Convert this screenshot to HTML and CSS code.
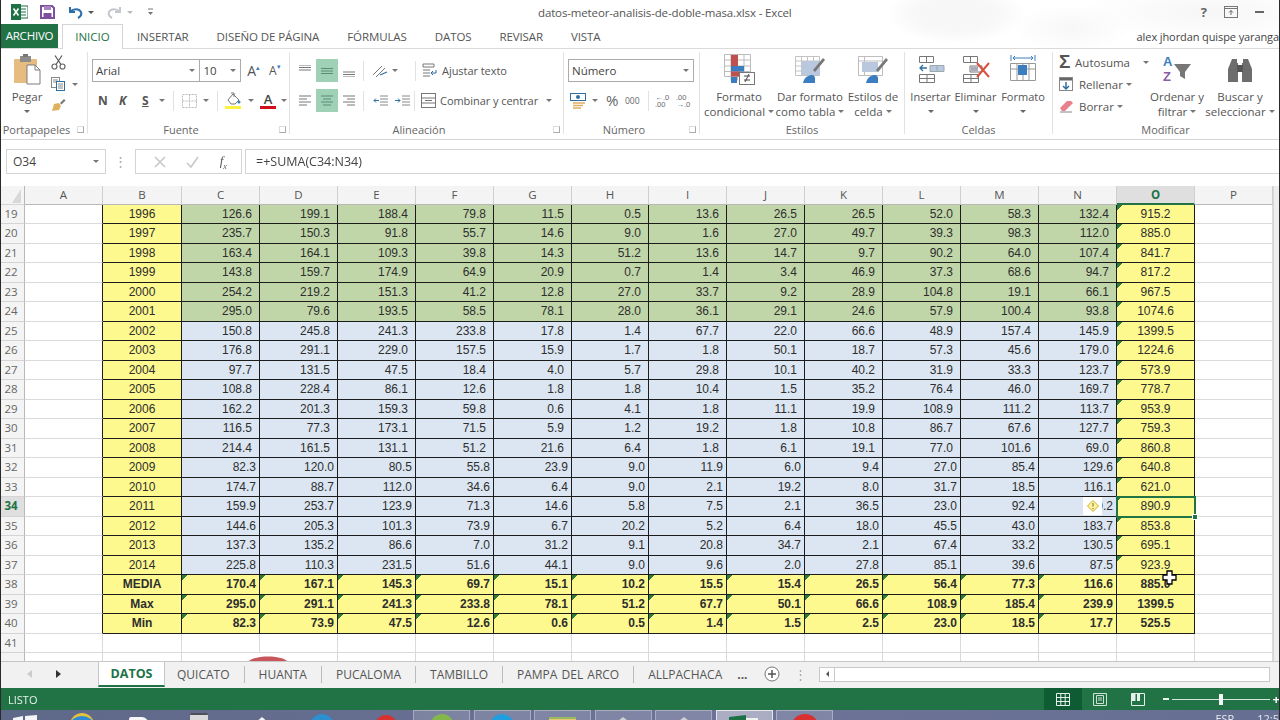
FILE: index.html
```html
<!DOCTYPE html>
<html lang="es">
<head>
<meta charset="utf-8">
<title>datos-meteor-analisis-de-doble-masa.xlsx - Excel</title>
<link rel="stylesheet" href="styles.css">
</head>
<body>
<div class="app">
  <header class="top">
    <div class="titlebar">
      <div class="qat">
        <svg class="q-xl" width="17" height="16" viewBox="0 0 17 16"><rect x="7" y="2" width="10" height="12" fill="#fff" stroke="#1e7145"/><path d="M10 5h5M10 8h5M10 11h5" stroke="#1e7145"/><rect y="0" width="10" height="16" fill="#1e7145"/><path d="M2.5 4.5l5 7M7.5 4.5l-5 7" stroke="#fff" stroke-width="1.6"/></svg>
        <svg class="q-save" width="15" height="14" viewBox="0 0 15 14"><path d="M1 1h11l2 2v10H1z" fill="#fff" stroke="#7d4f9e" stroke-width="2"/><rect x="4" y="1" width="7" height="4" fill="#a984c4"/><rect x="3.500" y="8" width="8" height="5" fill="#7d4f9e"/></svg>
        <svg class="q-undo" width="15" height="14" viewBox="0 0 15 14"><path d="M2 2v5h5M2.500 6.500C5 3.500 11 3 13 7c1 3-1 5-3 6" fill="none" stroke="#2c6fa8" stroke-width="2"/></svg>
        <i class="caret q-c1"></i>
        <svg class="q-redo" width="15" height="14" viewBox="0 0 15 14"><path d="M13 2v5H8M12.500 6.500C10 3.500 4 3 2 7c-1 3 1 5 3 6" fill="none" stroke="#c4c8cc" stroke-width="2"/></svg>
        <i class="caret q-c2"></i>
        <svg class="q-more" width="7" height="8" viewBox="0 0 7 8"><path d="M1 1h5" stroke="#777"/><path d="M1 4h5l-2.500 3z" fill="#777"/></svg>
      </div>
      <div class="doc-title">datos-meteor-analisis-de-doble-masa.xlsx - Excel</div>
      <div class="win-ctl">
        <span class="help">?</span>
        <svg width="14" height="12" viewBox="0 0 14 12"><rect x=".5" y=".5" width="13" height="11" fill="none" stroke="#777"/><path d="M1 2.500h12" stroke="#777"/><path d="M7 9V4.500M5 6.500l2-2 2 2" fill="none" stroke="#666"/></svg>
        <i class="minimize"></i>
      </div>
    </div>
    <nav class="tabs">
      <span class="tab-file">ARCHIVO</span>
      <span class="tab-active">INICIO</span>
      <span class="tab">INSERTAR</span>
      <span class="tab">DISEÑO DE PÁGINA</span>
      <span class="tab">FÓRMULAS</span>
      <span class="tab">DATOS</span>
      <span class="tab">REVISAR</span>
      <span class="tab">VISTA</span>
      <span class="account">alex jhordan quispe yaranga</span>
    </nav>
  </header>

  <section class="ribbon">
    <div class="group g-clip">
      <div class="gbody clip-body">
        <div class="big paste">
          <div class="bigicon">
            <svg width="28" height="31" viewBox="0 0 28 31"><rect x="1" y="5" width="23" height="24" rx="1" fill="#e6bc80"/><rect x="7" y="2" width="11" height="6" fill="#8d8d8d"/><rect x="10" y="0" width="5" height="3" fill="#777"/><path d="M14 11h8l5 5v14H14z" fill="#fff" stroke="#7c7c7c"/><path d="M22 11v5h5" fill="none" stroke="#7c7c7c"/></svg>
          </div>
          <span>Pegar</span>
          <i class="caret big-caret"></i>
        </div>
        <div class="clip-tools">
          <svg width="15" height="15" viewBox="0 0 15 15"><circle cx="3.500" cy="11.500" r="2.500" fill="none" stroke="#666" stroke-width="1.200"/><circle cx="11.500" cy="11.500" r="2.500" fill="none" stroke="#666" stroke-width="1.200"/><path d="M5 9.500L11 .5M10 9.500L4 .5" stroke="#555" stroke-width="1.200"/></svg>
          <span class="ct-row"><svg width="15" height="14" viewBox="0 0 15 14"><rect x=".5" y=".5" width="8" height="10" fill="#fff" stroke="#888"/><rect x="5.500" y="4.500" width="8" height="9" fill="#fff" stroke="#2f6f9f"/><path d="M2 3h5M2 5h3M7 7h5M7 9h5M7 11h5" stroke="#888"/></svg><i class="caret"></i></span>
          <svg width="15" height="14" viewBox="0 0 15 14"><path d="M9 5l4-4 1.500 1.500-4 4z" fill="#777"/><path d="M3 6l5-1 2 3-2 4-7 1z" fill="#e0b060"/></svg>
        </div>
      </div>
      <div class="glabel with-launcher">Portapapeles<i class="launcher"></i></div>
    </div>
    <i class="vsep"></i>

    <div class="group g-font">
      <div class="gbody rows2">
        <div class="rrow">
          <div class="combo c-font">Arial<i class="caret"></i></div>
          <div class="combo c-size">10<i class="caret"></i></div>
          <span class="grow-a">A<sup>▴</sup></span>
          <span class="shrink-a">A<sup>▾</sup></span>
        </div>
        <div class="rrow font-tools">
          <b class="fb">N</b>
          <b class="fb it">K</b>
          <b class="fb un">S</b><i class="caret c-s"></i>
          <i class="rsep"></i>
          <svg class="i-border" width="15" height="14" viewBox="0 0 15 14"><path d="M.5.5h14v13H.5zM7.500.5v13M.5 7h14" fill="none" stroke="#bbb" stroke-dasharray="2 1"/></svg><i class="caret"></i>
          <i class="rsep"></i>
          <svg class="i-fill" width="17" height="17" viewBox="0 0 17 17"><path d="M3 8l5-6 6 6-4 4H6z" fill="#fff" stroke="#777"/><path d="M6 1h3v4" fill="none" stroke="#777"/><circle cx="14" cy="10" r="1.500" fill="#3a7fc0"/><rect y="14" width="16" height="3" fill="#fff23d"/></svg><i class="caret"></i>
          <span class="i-color">A</span><i class="caret"></i>
        </div>
      </div>
      <div class="glabel with-launcher">Fuente<i class="launcher"></i></div>
    </div>
    <i class="vsep"></i>

    <div class="group g-align">
      <div class="gbody rows2">
        <div class="rrow">
          <span class="abtn"><svg width="16" height="12" viewBox="0 0 16 12"><path d="M2 0h12M2 2.500h12M2 5h12" stroke="#777"/></svg></span>
          <span class="abtn on"><svg width="16" height="12" viewBox="0 0 16 12"><path d="M2 3.500h12M2 6h12M2 8.500h12" stroke="#5d8c74"/></svg></span>
          <span class="abtn"><svg width="16" height="12" viewBox="0 0 16 12" class="low"><path d="M2 7h12M2 9.500h12M2 12h12" stroke="#777"/></svg></span>
          <i class="rsep s-a"></i>
          <svg class="i-orient" width="18" height="16" viewBox="0 0 18 16"><path d="M2 12l9-9M5 14l9-9" stroke="#777"/><path d="M9 12l7-3" stroke="#2f6f9f" stroke-width="1.300"/></svg><i class="caret"></i>
          <i class="rsep s-b"></i>
          <svg class="i-wrap" width="15" height="15" viewBox="0 0 15 15"><path d="M1 1h11v3H1zM1 7h7M1 10h7M1 13h7" fill="none" stroke="#777"/><path d="M14 7v3H9M11 8l-2 2 2 2" fill="none" stroke="#2f6f9f"/></svg>
          <span class="atext">Ajustar texto</span>
        </div>
        <div class="rrow">
          <span class="abtn"><svg width="16" height="12" viewBox="0 0 16 12"><path d="M2 1h12M2 4h8M2 7h12M2 10h8" stroke="#777"/></svg></span>
          <span class="abtn on"><svg width="16" height="12" viewBox="0 0 16 12"><path d="M2 1h12M4 4h8M2 7h12M4 10h8" stroke="#5d8c74"/></svg></span>
          <span class="abtn"><svg width="16" height="12" viewBox="0 0 16 12"><path d="M2 1h12M6 4h8M2 7h12M6 10h8" stroke="#777"/></svg></span>
          <i class="rsep s-a"></i>
          <svg class="i-indent" width="15" height="12" viewBox="0 0 15 12"><path d="M7 1h8M7 4h8M7 7h8M7 10h8" stroke="#888"/><path d="M6 5.500H1M3 3.500l-2 2 2 2" fill="none" stroke="#2f6f9f"/></svg>
          <svg class="i-indent2" width="15" height="12" viewBox="0 0 15 12"><path d="M7 1h8M7 4h8M7 7h8M7 10h8" stroke="#888"/><path d="M0 5.500h5M3 3.500l2 2-2 2" fill="none" stroke="#2f6f9f"/></svg>
          <i class="rsep s-c"></i>
          <svg class="i-merge" width="15" height="15" viewBox="0 0 15 15"><rect x=".5" y=".5" width="14" height="14" fill="none" stroke="#777"/><path d="M1 5h13M1 10h13M4 7.500h7" fill="none" stroke="#777"/></svg>
          <span class="atext">Combinar y centrar</span><i class="caret c-merge"></i>
        </div>
      </div>
      <div class="glabel with-launcher">Alineación<i class="launcher"></i></div>
    </div>
    <i class="vsep"></i>

    <div class="group g-num">
      <div class="gbody rows2">
        <div class="rrow"><div class="combo c-num">Número<i class="caret"></i></div></div>
        <div class="rrow num-tools">
          <svg class="i-cur" width="17" height="16" viewBox="0 0 17 16"><rect x=".5" y=".5" width="15" height="7" fill="#fff" stroke="#2f6f9f"/><circle cx="8" cy="4" r="2" fill="#2f6f9f"/><path d="M3 10h12M3 12.500h10M3 15h8" stroke="#e0b060" stroke-width="1.300"/></svg><i class="caret"></i>
          <span class="pct">%</span>
          <span class="mil">000</span>
          <i class="rsep s-n"></i>
          <span class="dec"><small class="b">←</small>.0<br>.00</span>
          <span class="dec d2">.00<br><small class="b">→</small>.0</span>
        </div>
      </div>
      <div class="glabel with-launcher">Número<i class="launcher"></i></div>
    </div>
    <i class="vsep"></i>

    <div class="group g-styles">
      <div class="gbody bigs">
        <div class="big w70">
          <div class="bigicon"><svg width="31" height="31" viewBox="0 0 31 31"><path d="M.5.5h26v22H.5zM.5 6h26M.5 12h26M.5 17.500h26M7 .5v26M13.500.5v26M20 .5v20" fill="none" stroke="#bbb"/><rect x="7" y="1" width="7" height="5" fill="#c0504d"/><rect x="7" y="6" width="7" height="6" fill="#c0504d"/><rect x="7" y="12" width="13" height="5.500" fill="#3a7ebf"/><rect x="7" y="17.500" width="9" height="5" fill="#c0504d"/><rect x="7" y="23" width="6" height="6" fill="#3a7ebf"/><rect x="15.500" y="18.500" width="15" height="12" fill="#fff" stroke="#777"/><path d="M20 22h6M20 26h6M25 20l-4 8" stroke="#444"/></svg></div>
          <span>Formato</span><span class="wc">condicional<i class="caret"></i></span>
        </div>
        <div class="big w72">
          <div class="bigicon"><svg width="31" height="31" viewBox="0 0 31 31"><path d="M.5 2.500h24v19H.5zM.5 7h24M.5 12h24M.5 17h24M6.500 2.500v19M12.500 2.500v19M18.500 2.500v19" fill="none" stroke="#c3c3c3"/><rect x="6.500" y="7" width="18" height="14" fill="#b9c8de"/><path d="M18 16L28 4l2 2-10 12z" fill="#777"/><path d="M8 29c1-6 6-8 9-8 2 0 3 2 3 3v5z" fill="#3a7ebf"/></svg></div>
          <span>Dar formato</span><span class="wc">como tabla<i class="caret"></i></span>
        </div>
        <div class="big w54">
          <div class="bigicon"><svg width="31" height="31" viewBox="0 0 31 31"><path d="M.5 2.500h24v19H.5zM.5 7h24M6.500 2.500V21" fill="none" stroke="#bdbdbd"/><rect x="4" y="8" width="16" height="10" fill="#b9c8de"/><path d="M18 16L28 4l2 2-10 12z" fill="#777"/><path d="M8 29c1-6 6-8 9-8 2 0 3 2 3 3v5z" fill="#3a7ebf"/></svg></div>
          <span>Estilos de</span><span class="wc">celda<i class="caret"></i></span>
        </div>
      </div>
      <div class="glabel">Estilos</div>
    </div>
    <i class="vsep"></i>

    <div class="group g-cells">
      <div class="gbody bigs">
        <div class="big w45">
          <div class="bigicon"><svg width="28" height="28" viewBox="0 0 28 28"><path d="M2.500 1.500h14v6h-14zM9.500 1.500v6M2.500 19.500h15v8h-15zM10 19.500v8M2.500 23.500h15" fill="none" stroke="#777"/><path d="M10 13H3M6 10l-3 3 3 3" fill="none" stroke="#2f6f9f" stroke-width="1.300"/><path d="M13 10.500h14v6H13zM20 10.500v6" fill="#b9c8de" stroke="#9aa"/></svg></div>
          <span>Insertar</span><i class="caret big-caret"></i>
        </div>
        <div class="big w45">
          <div class="bigicon"><svg width="30" height="28" viewBox="0 0 30 28"><path d="M2.500 1.500h14v6h-14zM9.500 1.500v6M2.500 19.500h15v8h-15zM10 19.500v8M2.500 23.500h15M9 11h12v6H9z" fill="none" stroke="#777"/><rect x="10" y="12" width="7" height="4" fill="#aab"/><path d="M16 8l12 14M28 8L16 22" stroke="#d9503c" stroke-width="2"/></svg></div>
          <span>Eliminar</span><i class="caret big-caret"></i>
        </div>
        <div class="big w50">
          <div class="bigicon"><svg width="28" height="30" viewBox="0 0 28 30"><path d="M1.500 9.500h25v17h-25zM1.500 15h25M8 9.500v17M14 9.500v17M20 9.500v17" fill="none" stroke="#999"/><rect x="9" y="11" width="9" height="10" fill="#3a7ebf"/><path d="M2 1v6M26 1v6M4 4h20M6 2L4 4l2 2M22 2l2 2-2 2" fill="none" stroke="#3a7ebf"/></svg></div>
          <span>Formato</span><i class="caret big-caret"></i>
        </div>
      </div>
      <div class="glabel">Celdas</div>
    </div>
    <i class="vsep"></i>

    <div class="group g-edit">
      <div class="gbody bigs">
        <div class="edit-col">
          <div class="edit-row"><span class="sigma">Σ</span><span>Autosuma</span><i class="caret c-sum"></i></div>
          <div class="edit-row"><svg width="15" height="15" viewBox="0 0 15 15"><rect x=".5" y=".5" width="13" height="13" fill="#fff" stroke="#888"/><rect x="1" y="1" width="12" height="2.500" fill="#666"/><path d="M7 5v7M4 9l3 3 3-3" fill="none" stroke="#2f6f9f" stroke-width="1.500"/></svg><span>Rellenar</span><i class="caret"></i></div>
          <div class="edit-row"><svg width="15" height="14" viewBox="0 0 15 14"><path d="M1 9l7-7h4l2 2-8 8H3z" fill="#e8808e"/><path d="M1 13h12" stroke="#888"/></svg><span>Borrar</span><i class="caret"></i></div>
        </div>
        <div class="big w56">
          <div class="bigicon"><svg width="32" height="32" viewBox="0 0 32 32"><text x="2" y="13" class="az-a">A</text><text x="2" y="28" class="az-z">Z</text><path d="M13 11h17l-6 8v7l-5-3v-4z" fill="#777"/></svg></div>
          <span>Ordenar y</span><span class="wc">filtrar<i class="caret"></i></span>
        </div>
        <div class="big w70">
          <div class="bigicon"><svg width="26" height="26" viewBox="0 0 26 26"><path d="M5 3h5v4h1v19H1V13zM21 3h-5v4h-1v19h10V13z" fill="#6d6d6d"/><rect x="10" y="9" width="6" height="7" fill="#555"/></svg></div>
          <span>Buscar y</span><span class="wc">seleccionar<i class="caret"></i></span>
        </div>
      </div>
      <div class="glabel">Modificar</div>
    </div>
  </section>

  <section class="formula">
    <div class="namebox">O34<i class="caret"></i></div>
    <span class="fdots">⋮</span>
    <div class="fbtns">
      <svg width="12" height="12" viewBox="0 0 12 12"><path d="M1 1l10 10M11 1L1 11" stroke="#c8c8c8" stroke-width="1.600"/></svg>
      <svg width="13" height="12" viewBox="0 0 13 12"><path d="M1 7l4 4 7-10" fill="none" stroke="#c8c8c8" stroke-width="1.600"/></svg>
      <span class="fx">f<sub>x</sub></span>
    </div>
    <div class="finput">=+SUMA(C34:N34)</div>
  </section>

  <section class="sheet">
    <div class="grid">
      <div class="row head">
        <span class="corner"><svg width="9" height="14" viewBox="0 0 9 14"><path d="M9 0v14H0z" fill="#d8d8d8"/></svg></span>
        <span>A</span><span>B</span><span>C</span><span>D</span><span>E</span><span>F</span><span>G</span><span>H</span><span>I</span><span>J</span><span>K</span><span>L</span><span>M</span><span>N</span><span class="cur">O</span><span>P</span>
      </div>
      <div class="row data green wide"><span>19</span><span></span><span>1996</span><span>126.6</span><span>199.1</span><span>188.4</span><span>79.8</span><span>11.5</span><span>0.5</span><span>13.6</span><span>26.5</span><span>26.5</span><span>52.0</span><span>58.3</span><span>132.4</span><span>915.2</span><span></span></div>
      <div class="row data green wide"><span>20</span><span></span><span>1997</span><span>235.7</span><span>150.3</span><span>91.8</span><span>55.7</span><span>14.6</span><span>9.0</span><span>1.6</span><span>27.0</span><span>49.7</span><span>39.3</span><span>98.3</span><span>112.0</span><span>885.0</span><span></span></div>
      <div class="row data green wide"><span>21</span><span></span><span>1998</span><span>163.4</span><span>164.1</span><span>109.3</span><span>39.8</span><span>14.3</span><span>51.2</span><span>13.6</span><span>14.7</span><span>9.7</span><span>90.2</span><span>64.0</span><span>107.4</span><span>841.7</span><span></span></div>
      <div class="row data green wide"><span>22</span><span></span><span>1999</span><span>143.8</span><span>159.7</span><span>174.9</span><span>64.9</span><span>20.9</span><span>0.7</span><span>1.4</span><span>3.4</span><span>46.9</span><span>37.3</span><span>68.6</span><span>94.7</span><span>817.2</span><span></span></div>
      <div class="row data green wide"><span>23</span><span></span><span>2000</span><span>254.2</span><span>219.2</span><span>151.3</span><span>41.2</span><span>12.8</span><span>27.0</span><span>33.7</span><span>9.2</span><span>28.9</span><span>104.8</span><span>19.1</span><span>66.1</span><span>967.5</span><span></span></div>
      <div class="row data green wide"><span>24</span><span></span><span>2001</span><span>295.0</span><span>79.6</span><span>193.5</span><span>58.5</span><span>78.1</span><span>28.0</span><span>36.1</span><span>29.1</span><span>24.6</span><span>57.9</span><span>100.4</span><span>93.8</span><span>1074.6</span><span></span></div>
      <div class="row data blue wide"><span>25</span><span></span><span>2002</span><span>150.8</span><span>245.8</span><span>241.3</span><span>233.8</span><span>17.8</span><span>1.4</span><span>67.7</span><span>22.0</span><span>66.6</span><span>48.9</span><span>157.4</span><span>145.9</span><span>1399.5</span><span></span></div>
      <div class="row data blue wide"><span>26</span><span></span><span>2003</span><span>176.8</span><span>291.1</span><span>229.0</span><span>157.5</span><span>15.9</span><span>1.7</span><span>1.8</span><span>50.1</span><span>18.7</span><span>57.3</span><span>45.6</span><span>179.0</span><span>1224.6</span><span></span></div>
      <div class="row data blue wide"><span>27</span><span></span><span>2004</span><span>97.7</span><span>131.5</span><span>47.5</span><span>18.4</span><span>4.0</span><span>5.7</span><span>29.8</span><span>10.1</span><span>40.2</span><span>31.9</span><span>33.3</span><span>123.7</span><span>573.9</span><span></span></div>
      <div class="row data blue wide"><span>28</span><span></span><span>2005</span><span>108.8</span><span>228.4</span><span>86.1</span><span>12.6</span><span>1.8</span><span>1.8</span><span>10.4</span><span>1.5</span><span>35.2</span><span>76.4</span><span>46.0</span><span>169.7</span><span>778.7</span><span></span></div>
      <div class="row data blue wide"><span>29</span><span></span><span>2006</span><span>162.2</span><span>201.3</span><span>159.3</span><span>59.8</span><span>0.6</span><span>4.1</span><span>1.8</span><span>11.1</span><span>19.9</span><span>108.9</span><span>111.2</span><span>113.7</span><span>953.9</span><span></span></div>
      <div class="row data blue wide"><span>30</span><span></span><span>2007</span><span>116.5</span><span>77.3</span><span>173.1</span><span>71.5</span><span>5.9</span><span>1.2</span><span>19.2</span><span>1.8</span><span>10.8</span><span>86.7</span><span>67.6</span><span>127.7</span><span>759.3</span><span></span></div>
      <div class="row data blue wide"><span>31</span><span></span><span>2008</span><span>214.4</span><span>161.5</span><span>131.1</span><span>51.2</span><span>21.6</span><span>6.4</span><span>1.8</span><span>6.1</span><span>19.1</span><span>77.0</span><span>101.6</span><span>69.0</span><span>860.8</span><span></span></div>
      <div class="row data blue"><span>32</span><span></span><span>2009</span><span>82.3</span><span>120.0</span><span>80.5</span><span>55.8</span><span>23.9</span><span>9.0</span><span>11.9</span><span>6.0</span><span>9.4</span><span>27.0</span><span>85.4</span><span>129.6</span><span>640.8</span><span></span></div>
      <div class="row data blue"><span>33</span><span></span><span>2010</span><span>174.7</span><span>88.7</span><span>112.0</span><span>34.6</span><span>6.4</span><span>9.0</span><span>2.1</span><span>19.2</span><span>8.0</span><span>31.7</span><span>18.5</span><span>116.1</span><span>621.0</span><span></span></div>
      <div class="row data blue active"><span>34</span><span></span><span>2011</span><span>159.9</span><span>253.7</span><span>123.9</span><span>71.3</span><span>14.6</span><span>5.8</span><span>7.5</span><span>2.1</span><span>36.5</span><span>23.0</span><span>92.4</span><span class="has-tag">100.2<em class="errtag"><svg width="12" height="12" viewBox="0 0 12 12"><path d="M6 .5L11.500 6 6 11.500.5 6z" fill="#fdf3a0" stroke="#c9ad2c"/><path d="M6 3v3.500M6 8v1.200" stroke="#8a6a10"/></svg></em></span><span class="selected">890.9<em class="handle"></em></span><span></span></div>
      <div class="row data blue"><span>35</span><span></span><span>2012</span><span>144.6</span><span>205.3</span><span>101.3</span><span>73.9</span><span>6.7</span><span>20.2</span><span>5.2</span><span>6.4</span><span>18.0</span><span>45.5</span><span>43.0</span><span>183.7</span><span>853.8</span><span></span></div>
      <div class="row data blue"><span>36</span><span></span><span>2013</span><span>137.3</span><span>135.2</span><span>86.6</span><span>7.0</span><span>31.2</span><span>9.1</span><span>20.8</span><span>34.7</span><span>2.1</span><span>67.4</span><span>33.2</span><span>130.5</span><span>695.1</span><span></span></div>
      <div class="row data blue"><span>37</span><span></span><span>2014</span><span>225.8</span><span>110.3</span><span>231.5</span><span>51.6</span><span>44.1</span><span>9.0</span><span>9.6</span><span>2.0</span><span>27.8</span><span>85.1</span><span>39.6</span><span>87.5</span><span>923.9</span><span></span></div>
      <div class="row data stat"><span>38</span><span></span><span>MEDIA</span><span>170.4</span><span>167.1</span><span>145.3</span><span>69.7</span><span>15.1</span><span>10.2</span><span>15.5</span><span>15.4</span><span>26.5</span><span>56.4</span><span>77.3</span><span>116.6</span><span class="has-cursor">885.0<svg class="cursor" width="15" height="15" viewBox="0 0 15 15"><path d="M5 1h5v4h4v5h-4v4H5v-4H1V5h4z" fill="#fff" stroke="#000" stroke-width="1.300"/></svg></span><span></span></div>
      <div class="row data stat"><span>39</span><span></span><span>Max</span><span>295.0</span><span>291.1</span><span>241.3</span><span>233.8</span><span>78.1</span><span>51.2</span><span>67.7</span><span>50.1</span><span>66.6</span><span>108.9</span><span>185.4</span><span>239.9</span><span>1399.5</span><span></span></div>
      <div class="row data stat"><span>40</span><span></span><span>Min</span><span>82.3</span><span>73.9</span><span>47.5</span><span>12.6</span><span>0.6</span><span>0.5</span><span>1.4</span><span>1.5</span><span>2.5</span><span>23.0</span><span>18.5</span><span>17.7</span><span>525.5</span><span></span></div>
      <div class="row"><span>41</span><span></span><span></span><span></span><span></span><span></span><span></span><span></span><span></span><span></span><span></span><span></span><span></span><span></span><span></span><span></span><span></span></div>
      <div class="row"><span></span><span></span><span></span><span></span><span></span><span></span><span></span><span></span><span></span><span></span><span></span><span></span><span></span><span></span><span></span><span></span><span></span></div>
      <svg class="stamp" width="73" height="8" viewBox="0 0 73 8"><rect width="73" height="8" fill="#fff"/><path d="M17 8C23 2 49 2 55 8z" fill="#c8565a"/></svg>
    </div>
    <div class="vscroll"></div>
  </section>

  <section class="sheetbar">
    <div class="sheetnav"><i class="tri-l"></i><i class="tri-r"></i></div>
    <div class="sheettabs">
      <span class="stab on">DATOS</span>
      <span class="stab first">QUICATO</span>
      <span class="stab">HUANTA</span>
      <span class="stab">PUCALOMA</span>
      <span class="stab">TAMBILLO</span>
      <span class="stab">PAMPA DEL ARCO</span>
      <span class="stab last">ALLPACHACA</span>
      <b class="more">...</b>
    </div>
    <svg class="addsheet" width="16" height="16" viewBox="0 0 16 16"><circle cx="8" cy="8" r="7" fill="#fff" stroke="#777"/><path d="M8 4v8M4 8h8" stroke="#555" stroke-width="1.500"/></svg>
    <span class="bdots">⋮</span>
    <div class="hscroll"><span class="hs-btn"><i class="tri-s"></i></span><span class="hs-track"></span></div>
  </section>

  <footer class="status">
    <span class="ready">LISTO</span>
    <div class="views">
      <span class="view on"><svg width="14" height="13" viewBox="0 0 14 13"><path d="M.5.500h13v12H.5zM.5 4.500h13M.5 8.500h13M4.800.5v12M9.200.5v12" fill="none" stroke="#e6f0ea"/></svg></span>
      <span class="view"><svg width="14" height="13" viewBox="0 0 14 13"><path d="M.5.500h13v12H.5z" fill="none" stroke="#cfe0d6"/><path d="M3.500 2.500h7v8h-7zM5 5h4M5 7h4" fill="none" stroke="#cfe0d6"/></svg></span>
      <span class="view"><svg width="14" height="13" viewBox="0 0 14 13"><path d="M.5.500h13v12H.5z" fill="none" stroke="#e6f0ea"/><path d="M1 1h3.500v7H1zM6 1h3v7H6z" fill="#e6f0ea"/></svg></span>
    </div>
    <div class="zoom">
      <i class="z-minus"></i>
      <div class="z-track"><i class="z-thumb"></i></div>
      <span class="z-plus">+</span>
    </div>
  </footer>

  <div class="taskbar">
    <span class="slot s48"><svg class="t-win" width="26" height="12" viewBox="0 0 26 12"><path d="M1 3l10-2v11H1zM13 1l12-1v12H13z" fill="#f4f5f8"/></svg></span>
    <span class="slot s68"><i class="dot ie"></i></span>
    <span class="slot s44"><i class="paper"></i></span>
    <span class="slot s78"><i class="calc"></i></span>
    <span class="slot s48"><i class="uparrow"></i></span>
    <span class="slot s72"><i class="dot ff"></i></span>
    <span class="slot s55"><i class="dot red"></i></span>
    <span class="tbtn"><i class="dot lime"></i></span>
    <span class="tbtn"><i class="dot sky"></i></span>
    <span class="tbtn"><i class="folder"></i></span>
    <span class="tbtn"><i class="graytri"></i></span>
    <span class="tbtn"><i class="graytri"></i></span>
    <span class="tbtn open"><svg class="t-xl" width="32" height="8" viewBox="0 0 32 8"><rect x="16" y="3" width="14" height="5" fill="#eef3ef"/><path d="M1 2l17-2v8H1z" fill="#1e7145"/></svg></span>
    <span class="tbtn"><i class="dot red big-red"></i></span>
    <span class="tray"><span>ESP</span><span>12:5</span></span>
  </div>
</div>
</body>
</html>
```

FILE: styles.css
```css
* { box-sizing: border-box; }
html, body { margin: 0; padding: 0; }
body { width: 1280px; height: 720px; overflow: hidden; background: #fff; }
i, em { font-style: normal; display: inline-block; }
svg { flex: none; }

.app {
  width: 1280px; height: 720px; display: flex; flex-direction: column; overflow: hidden;
  border-left: 1px solid #2a2a2a; border-right: 1px solid #2a2a2a;
  font-family: "Open Sans", "Noto Sans", sans-serif; font-size: 11.5px; color: #555;
  filter: blur(.35px);
}

.caret { width: 0; height: 0; border: 3px solid transparent; border-top: 3px solid #777; border-bottom: 0; flex: none; }

/* title + tabs */
.top {
  height: 48px; flex: none;
  background:
    radial-gradient(ellipse 70px 30px at 955px 14px, #f6f6f6 0, #f8f8f8 60%, rgba(255,255,255,0) 100%),
    radial-gradient(ellipse 60px 24px at 1070px 28px, #f7f7f7 0, rgba(255,255,255,0) 100%),
    radial-gradient(ellipse 130px 30px at 1210px 12px, #f6f6f6 0, rgba(255,255,255,0) 100%),
    #fff;
}
.titlebar { height: 24px; display: flex; align-items: center; position: relative; }
.qat { display: flex; align-items: center; width: 300px; padding-left: 10px; }
.q-save { margin-left: 12px; }
.q-undo { margin-left: 13px; }
.q-c1 { margin-left: 5px; border-top-color: #555; }
.q-redo { margin-left: 13px; }
.q-c2 { margin-left: 5px; border-top-color: #bbb; }
.q-more { margin-left: 14px; }
.doc-title { margin-left: 237px; font-size: 11.5px; color: #555; letter-spacing: -.14px; white-space: nowrap; width: 600px; }
.win-ctl { display: flex; align-items: center; margin-left: auto; padding-right: 15px; }
.help { font-weight: 700; font-size: 13px; color: #666; margin-right: 17px; }
.minimize { width: 9px; height: 2px; background: #666; margin-left: 17px; }

.tabs { height: 24px; display: flex; align-items: center; font-size: 11.5px; color: #555; }
.tab-file { width: 57px; height: 24px; line-height: 24px; background: #217346; color: #fff; text-align: center; font-size: 11.5px; letter-spacing: -.2px; }
.tab-active {
  width: 61px; height: 25px; line-height: 24px; margin: 0 14px 0 4px; text-align: center; color: #217346;
  background: #fff; border: 1px solid #d4d4d4; border-bottom: 0; position: relative; z-index: 1; top: .5px;
}
.tab { margin-right: 28px; white-space: nowrap; letter-spacing: -.1px; }
.account { margin-left: auto; font-size: 11px; white-space: nowrap; letter-spacing: -.1px; color: #444; }

/* ribbon */
.ribbon { height: 92px; flex: none; display: flex; background: #fff; border-top: 1px solid #dadada; border-bottom: 1px solid #d4d4d4; }
.vsep { width: 1px; height: 82px; margin-top: 3px; background: #e2e2e2; flex: none; }
.group { display: flex; flex-direction: column; flex: none; }
.gbody { height: 73px; flex: none; }
.glabel { height: 15px; line-height: 15px; text-align: center; font-size: 11px; color: #666; position: relative; }
.with-launcher { padding-right: 15px; }
.launcher { position: absolute; right: 3px; top: 4px; width: 7px; height: 7px; border: 1px solid #aaa; border-left-color: #ddd; border-top-color: #ddd; }

.g-clip { width: 86px; }
.g-font { width: 201px; }
.g-align { width: 273px; }
.g-num { width: 135px; }
.g-styles { width: 204px; }
.g-cells { width: 147px; }
.g-edit { width: 225px; }

.clip-body { display: flex; padding-left: 2px; }
.paste { width: 48px; }
.big { display: flex; flex-direction: column; align-items: center; flex: none; line-height: 15px; white-space: nowrap; color: #555; font-size: 11.5px; }
.bigicon { height: 40px; width: 100%; display: flex; align-items: center; justify-content: center; }
.big-caret { margin-top: 6px; border-top-color: #666; }
.wc { display: flex; align-items: center; gap: 3px; }
.clip-tools { display: flex; flex-direction: column; align-items: flex-start; gap: 7px; padding: 6px 0 0 0; }
.ct-row { display: flex; align-items: center; gap: 6px; }

.rows2 { padding-top: 10px; display: flex; flex-direction: column; gap: 7px; }
.rrow { height: 23px; display: flex; align-items: center; }
.g-font .rrow:first-child { padding-left: 4px; }
.combo { height: 23px; border: 1px solid #ababab; background: #fff; display: flex; align-items: center; justify-content: space-between; padding: 0 4px 0 3px; color: #444; font-size: 11.5px; }
.c-font { width: 109px; }
.c-size { width: 42px; margin-left: -1px; }
.grow-a { font-size: 14px; margin-left: 6px; width: 22px; }
.shrink-a { font-size: 12px; width: 20px; }
.grow-a sup, .shrink-a sup { font-size: 7px; line-height: 0; vertical-align: 6px; color: #3a7ebf; }
.font-tools { padding-left: 10px; }
.fb { font-family: "Open Sans", sans-serif; font-size: 12px; width: 21px; color: #555; }
.it { font-style: italic; }
.un { text-decoration: underline; width: 16px; margin-left: 2px; }
.c-s { margin-left: 1px; }
.rsep { width: 1px; height: 20px; background: #e2e2e2; margin: 0 7px 0 8px; flex: none; }
.i-border { margin-right: 6px; margin-left: 1px; }
.i-fill { margin-right: 6px; }
.i-color { width: 16px; margin: 0 5px 0 6px; text-align: center; color: #444; font-size: 13px; font-weight: 600; line-height: 14px; border-bottom: 3px solid #d0101c; }

.abtn { width: 22px; height: 23px; display: flex; align-items: center; justify-content: center; flex: none; }
.abtn.on { background: #9fd1b6; }
.g-align .rrow { padding-left: 4px; }
.s-a { margin: 0 7px 0 3px; }
.i-orient { margin-right: 3px; margin-left: 0; }
.s-b { margin: 0 6px 0 17px; }
.i-wrap { margin-right: 5px; }
.atext { font-size: 11px; white-space: nowrap; color: #555; letter-spacing: -.05px; }
.i-indent { margin-left: 2px; }
.i-indent2 { margin-left: 7px; }
.s-c { margin: 0 6px 0 4px; }
.i-merge { margin-right: 4px; }
.c-merge { margin-left: 8px; }

.g-num .rrow { padding-left: 4px; }
.c-num { width: 126px; }
.i-cur { margin: 0 5px 0 2px; }
.pct { font-size: 15px; margin-left: 8px; width: 12px; color: #666; flex: none; line-height: 15px; }
.mil { font-size: 8.500px; margin-left: 7px; width: 15px; color: #666; flex: none; }
.s-n { margin: 0 6px 0 8px; }
.dec { font-size: 7.500px; line-height: 7px; color: #666; margin-right: 7px; width: 14px; flex: none; white-space: nowrap; font-family: "Liberation Sans", sans-serif; }
.dec .b { color: #2f6f9f; font-size: 8px; }

.bigs { display: flex; padding-left: 4px; }
.w70 { width: 70px; } .w72 { width: 72px; } .w54 { width: 54px; }
.w45 { width: 45px; } .w50 { width: 50px; } .w56 { width: 56px; }
.g-cells .bigs { padding-left: 3px; }
.g-cells .big { font-size: 11px; }
.edit-col { width: 92px; padding: 2px 0 0 2px; flex: none; display: flex; flex-direction: column; }
.edit-row { height: 22px; display: flex; align-items: center; gap: 4px; white-space: nowrap; color: #555; }
.edit-row svg { margin-right: 1px; }
.edit-row .caret { margin-left: -1px; }
.sigma { font-family: "Liberation Sans", sans-serif; font-size: 19px; font-weight: 700; color: #555; width: 17px; line-height: 16px; }
.c-sum { margin-left: 9px !important; }
.az-a { font: 700 13px "Liberation Sans", sans-serif; fill: #3a7ebf; }
.az-z { font: 700 13px "Liberation Sans", sans-serif; fill: #8a5aa8; }

/* formula bar */
.formula { height: 46px; flex: none; display: flex; align-items: flex-start; padding: 9px 0 0 5px; background: #fff; }
.namebox { width: 100px; height: 25px; border: 1px solid #d4d4d4; display: flex; align-items: center; justify-content: space-between; padding: 0 6px; color: #444; font-size: 12px; }
.fdots { width: 29px; text-align: center; line-height: 25px; color: #aaa; font-size: 13px; }
.fbtns { width: 107px; height: 25px; border: 1px solid #d4d4d4; display: flex; align-items: center; justify-content: space-around; padding: 0 4px 0 8px; }
.fx { font-family: "Liberation Serif", serif; font-style: italic; font-size: 13px; color: #555; }
.fx sub { font-size: 8px; }
.finput { flex: 1; height: 25px; margin-left: 3px; border: 1px solid #d4d4d4; border-right: 0; line-height: 23px; padding-left: 10px; font-size: 12.500px; color: #444; }

/* sheet */
.sheet { height: 475px; flex: none; display: flex; overflow: hidden; font-family: "Liberation Sans", Arial, sans-serif; }
.grid { width: 1272px; flex: none; position: relative; }
.vscroll { flex: 1; background: #eeeeee; border-left: 1px solid #d8d8d8; }
.row {
  display: grid; height: 19.500px;
  grid-template-columns: 24px 78px 79px repeat(5, 78px) 77px repeat(8, 78px);
}
.row > span {
  display: block; height: 100%; line-height: 18.500px; font-size: 12px; color: #333; white-space: nowrap;
  border-right: 1px solid #dadada; border-bottom: 1px solid #dadada; position: relative;
}
.row > span:first-child {
  background: #f4f4f4; border-right-color: #b8b8b8; border-bottom-color: #d4d4d4; color: #666; text-align: center;
  font-family: "Open Sans", sans-serif; font-size: 11.500px; padding-right: 3px;
}
.head { height: 18.500px; }
.head > span {
  background: #f4f4f4; text-align: center; color: #555; font-family: "Open Sans", sans-serif; font-size: 11.500px;
  border-right-color: #cfcfcf; border-bottom-color: #b8b8b8; line-height: 17px;
}
.corner { display: flex !important; align-items: flex-end; justify-content: flex-end; padding: 0 3px 1px 0; }
.head > span.cur { background: #dfdfdf; color: #217346; font-weight: 700; border-bottom: 2px solid #217346; }

.data > span:nth-child(2) { border-right-color: #1c1c1c; }
.data > span:nth-child(n+3):nth-child(-n+16) { border-right-color: #1c1c1c; border-bottom-color: #1c1c1c; color: #2e2e2e; }
.data > span:nth-child(n+4):nth-child(-n+15) { text-align: right; padding-right: 3px; }
.data > span:nth-child(3), .data > span:nth-child(16) { text-align: center; background: #fdf98e; }
.wide > span:nth-child(n+4):nth-child(-n+15) { padding-right: 7px; }
.green > span:nth-child(n+4):nth-child(-n+15) { background: #c0d6a9; }
.blue > span:nth-child(n+4):nth-child(-n+15) { background: #dbe6f2; }
.data > span:nth-child(16) { background-image: linear-gradient(135deg, #2f7a3d 4px, transparent 4px); }
.stat > span:nth-child(n+3):nth-child(-n+16) { background-color: #fdf98e; font-weight: 700; }
.stat > span:nth-child(n+4):nth-child(-n+15) { background-image: linear-gradient(135deg, #2f7a3d 4px, transparent 4px); }
.stat > span:nth-child(16) { background-image: none; }
.active > span:first-child { background: #dfdfdf; color: #217346; font-weight: 700; }

.selected { outline: 2px solid #217346; outline-offset: -1px; z-index: 2; background-image: linear-gradient(135deg, #2f7a3d 3px, transparent 3px) !important; }
.handle { position: absolute; right: -4px; bottom: -4px; width: 6px; height: 6px; background: #217346; border: 1px solid #fff; }
.errtag { position: absolute; left: 44px; top: 0; width: 19px; height: 18px; background: #fff; display: flex; align-items: center; justify-content: center; }
.cursor { position: absolute; left: 45px; top: -5px; z-index: 3; }
.stamp { position: absolute; left: 231px; top: 467px; }

/* sheet tabs */
.sheetbar { height: 27px; flex: none; display: flex; align-items: center; background: #f1f1f1; border-top: 1px solid #c6c6c6; padding-bottom: 2px; }
.sheetnav { width: 97px; display: flex; align-items: center; padding-left: 26px; flex: none; }
.tri-l { width: 0; height: 0; border: 4px solid transparent; border-right: 5px solid #ccc; border-left: 0; }
.tri-r { width: 0; height: 0; border: 4px solid transparent; border-left: 5px solid #333; border-right: 0; margin-left: 24px; }
.sheettabs { display: flex; align-items: center; flex: none; width: 664px; }
.stab { padding: 0 14px; line-height: 17px; font-size: 12px; color: #555; border-right: 1px solid #bbb; white-space: nowrap; word-spacing: 1px; }
.stab.on {
  width: 67px; height: 25px; line-height: 23px; padding: 0; text-align: center; background: #fff; color: #217346; font-weight: 700; font-size: 12.500px;
  border: 1px solid #c6c6c6; border-top: 0; border-bottom: 2px solid #217346; margin-top: 1px;
}
.stab.first { padding-left: 12px; }
.stab.last { border-right: 0; }
.more { font-weight: 700; color: #555; font-size: 12px; margin-left: 1px; }
.addsheet { flex: none; margin-left: 2px; }
.bdots { width: 38px; text-align: center; color: #aaa; font-size: 13px; flex: none; margin-left: 1px; }
.hscroll { width: 451px; height: 15px; flex: none; display: flex; background: #fff; border: 1px solid #c9c9c9; }
.hs-btn { width: 15px; height: 13px; background: #fff; border-right: 1px solid #c9c9c9; display: flex; align-items: center; justify-content: center; }
.tri-s { width: 0; height: 0; border: 3px solid transparent; border-right: 3px solid #555; border-left: 0; }
.hs-track { flex: 1; }

/* status */
.status { height: 22px; flex: none; background: #217346; display: flex; align-items: center; padding-left: 7px; color: #e8f2ec; font-size: 11px; }
.ready { width: 1036px; flex: none; }
.views { display: flex; height: 22px; flex: none; }
.view { width: 37.500px; display: flex; align-items: center; justify-content: center; }
.view.on { background: #0f5c34; }
.zoom { display: flex; align-items: center; margin-left: 6px; }
.z-minus { width: 6px; height: 2px; background: #e8f2ec; }
.z-track { width: 98px; height: 1px; background: #d5e5db; margin: 0 3px 0 3px; position: relative; }
.z-thumb { position: absolute; left: 47px; top: -5px; width: 4px; height: 11px; background: #f4f8f5; }
.z-plus { font-weight: 700; font-size: 13px; color: #fff; }

/* taskbar */
.taskbar { height: 11px; flex: none; display: flex; overflow: hidden; background: linear-gradient(90deg, #5e6888, #6d7398 55%, #666f92); position: relative; }
.slot, .tbtn { display: flex; justify-content: center; flex: none; height: 11px; }
.s48 { width: 48px; } .s68 { width: 68px; } .s44 { width: 44px; } .s78 { width: 78px; } .s72 { width: 72px; } .s55 { width: 55px; }
.slot:first-child { width: 47px; }
.tbtn { width: 57px; margin-right: 3.500px; background: rgba(255,255,255,.14); border: 1px solid rgba(255,255,255,.32); border-bottom: 0; }
.tbtn.open { background: rgba(255,255,255,.42); border-color: rgba(255,255,255,.7); }
.t-win { margin-top: 5px; }
.t-xl { margin-top: 4px; }
.dot { width: 24px; height: 24px; border-radius: 50%; margin-top: 4px; flex: none; }
.ie { background: #2f8ad6; border-top: 3px solid #e5c23c; margin-top: 3px; }
.ff { background: #2c8fcf; margin-top: 4px; }
.red { background: #d93030; margin-top: 5px; width: 22px; height: 22px; }
.big-red { margin-top: 3px; width: 28px; height: 28px; }
.lime { background: #84b74a; margin-top: 3px; }
.sky { background: #1f9ee0; margin-top: 3px; }
.paper { width: 19px; height: 12px; background: #f6f6f8; margin-top: 7px; border-radius: 2px 6px 0 0; }
.calc { width: 18px; height: 12px; margin-top: 3px; background: #d9d9dc; border-top: 2px solid #4c4f5c; border-radius: 2px 2px 0 0; }
.uparrow { width: 0; height: 0; margin-top: 7px; border: 7px solid transparent; border-bottom: 6px solid #f5f5f7; border-top: 0; }
.folder { width: 27px; height: 10px; margin-top: 6px; background: #e5c878; border-top: 2px solid #9ab85c; }
.graytri { width: 0; height: 0; margin-top: 6px; border: 9px solid transparent; border-bottom: 7px solid #cfd0d4; border-top: 0; }
.tray { position: absolute; right: 0; top: 2px; display: flex; gap: 23px; color: #e6e8f2; font-size: 11px; line-height: 14px; }
```
